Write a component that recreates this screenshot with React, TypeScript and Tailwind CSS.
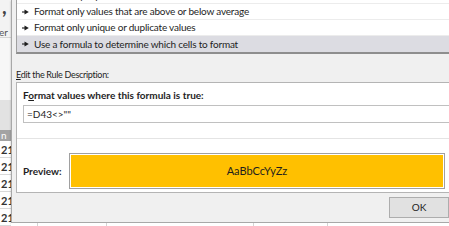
import React from 'react';

// Flecha pequeña del listado de tipos de regla
function Pointer() {
  return (
    <svg width="7" height="6" viewBox="0 0 7 6" className="shrink-0">
      <path d="M0 3h3" stroke="#1e1e1e" strokeWidth="1.1" />
      <path d="M2.5 0.4 L6.8 3 L2.5 5.6 Z" fill="#1e1e1e" />
    </svg>
  );
}

const rules = [
  'Format only values that are above or below average',
  'Format only unique or duplicate values',
  'Use a formula to determine which cells to format',
];

export default function App() {
  return (
    <div
      className="w-[449px] h-[226px] overflow-hidden flex bg-white text-[#1e1e1e]"
      style={{ fontFamily: 'Lato, "Noto Sans", sans-serif' }}
    >
      {/* HOJA DE CÁLCULO (franja izquierda) */}
      <div className="w-[11px] shrink-0 flex flex-col overflow-hidden">
        <div className="h-[37px] bg-[#f3f3f3] flex flex-col items-start">
          <span className="text-[20px] font-bold leading-[16px] text-[#444] pl-[2px] -mt-[2px]">,</span>
          <span className="text-[10px] leading-[12px] text-[#555] mt-[12px] -ml-[1px] whitespace-nowrap">er</span>
        </div>
        <div className="h-px bg-[#d6d6d6]" />
        <div className="h-[69px] bg-[#f7f7f7]" />
        <div className="h-[33px] bg-[#e2e2e2]" />
        <div className="h-[11px] bg-[#a3a3a3] text-white text-[10px] leading-[11px] pl-[1px]">n</div>
        {[0, 1, 2, 3, 4].map((i) => (
          <div
            key={i}
            className="h-[17px] shrink-0 border-b border-[#d9d9d9] text-[11px] leading-[17px] font-bold text-[#333] pl-[1px] whitespace-nowrap"
          >
            21
          </div>
        ))}
      </div>

      <div className="flex-1 flex flex-col min-w-0">
        {/* DIÁLOGO */}
        <div className="h-[223px] shrink-0 bg-[#f0f0f0] border-l border-b border-[#a8a8a8] pl-[4px] flex flex-col text-[10px] shadow-[0_1px_2px_rgba(0,0,0,0.25)]">
          {/* Listado de tipos de regla */}
          <div className="w-[440px] bg-white border-l border-[#a0a0a0] border-b-2 border-b-[#8e8e8e] flex flex-col tracking-[-0.2px]">
            <div className="h-[16px] -mt-[12px] border-b border-[#ececec] flex items-center gap-[5px] pl-[5px] whitespace-nowrap">
              <Pointer />
              <span>Format only top or bottom ranked values</span>
            </div>
            {rules.map((r, i) => (
              <div
                key={r}
                className={`h-[16px] flex items-center gap-[5px] pl-[5px] whitespace-nowrap ${
                  i === 2 ? 'bg-[#dcdce2]' : 'border-b border-[#ececec]'
                }`}
              >
                <Pointer />
                <span>{r}</span>
              </div>
            ))}
          </div>

          <div className="mt-[14px] h-[13px] leading-[13px] text-[9px] tracking-[-0.3px]">
            <span className="underline">E</span>dit the Rule Description:
          </div>

          {/* Panel de descripción */}
          <div className="mt-px w-[440px] h-[111px] bg-white border border-[#b4b4b4] flex flex-col pl-[6px]">
            <div className="mt-[6px] font-bold h-[13px] leading-[13px]">
              F<span className="underline">o</span>rmat values where this formula is true:
            </div>
            <div className="mt-[3px] h-[18px] border border-[#c0c0c0] flex items-center pl-[3px] text-[10px]">
              =D43&lt;&gt;""
            </div>
            <div className="mt-[15px] -ml-[6px] h-px bg-[#e4e4e4]" />
            <div className="mt-[14px] flex items-center">
              <div className="w-[46px] font-bold">Preview:</div>
              <div className="w-[376px] h-[36px] border border-[#a0a0a0] p-px">
                <div className="h-full bg-[#ffc000] flex items-center justify-center text-[11px]">
                  AaBbCcYyZz
                </div>
              </div>
            </div>
          </div>

          <div className="mt-[4px] flex justify-end">
            <div className="w-[60px] h-[21px] bg-[#e1e1e1] border border-[#adadad] flex items-center justify-center">
              OK
            </div>
          </div>
        </div>

        {/* Cuadrícula bajo el diálogo */}
        <div className="flex-1 flex bg-white">
          <div className="w-[27px] border-r border-[#d4d4d4]" />
          <div className="w-[69px] border-r border-[#d4d4d4]" />
          <div className="w-[147px] border-r border-[#d4d4d4]" />
          <div className="w-[74px] border-r border-[#d4d4d4]" />
        </div>
      </div>
    </div>
  );
}
